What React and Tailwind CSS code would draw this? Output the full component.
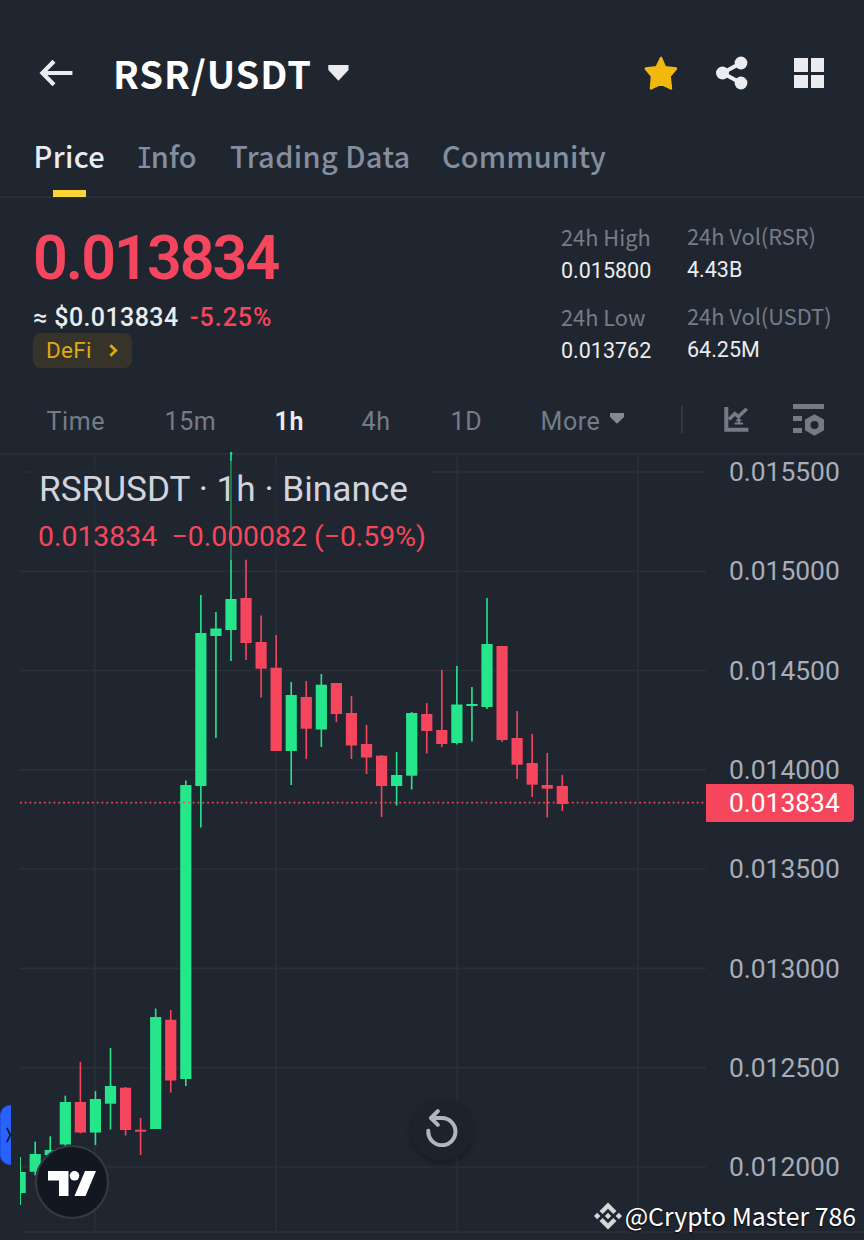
const UP = '#26e68b'
const DOWN = '#f6465d'

// [high, bodyTop, bodyBottom, low, rising] in chart pixels
const candles = [
  [1157, 1172, 1193, 1205, 1],
  [1141.7, 1154, 1171.7, 1175.5, 1],
  [1136.3, 1150, 1155, 1157, 1],
  [1095.7, 1102, 1144.5, 1148, 1],
  [1062, 1102, 1132.5, 1133.3, 0],
  [1091, 1099, 1132.5, 1145, 1],
  [1048, 1086, 1103.7, 1129.5, 1],
  [1087, 1087.7, 1130, 1135.5, 0],
  [1118, 1129.7, 1131.7, 1155, 0],
  [1008.5, 1017, 1129, 1129, 1],
  [1010, 1019.7, 1080.5, 1092.5, 0],
  [780.5, 785, 1079, 1086, 1],
  [595, 633, 786, 827.5, 1],
  [612, 628.5, 636, 738, 1],
  [452, 599, 630, 661, 1],
  [559.5, 598, 643, 660, 0],
  [615.5, 642, 668.7, 697.5, 0],
  [635, 667.7, 751, 751, 0],
  [682, 695, 751, 785, 1],
  [681, 697, 728.7, 759, 0],
  [674, 684.7, 729.5, 747, 1],
  [683, 683, 714, 722, 0],
  [696, 713, 745.5, 759, 0],
  [725, 744, 757.5, 774, 0],
  [755, 755.7, 786, 817, 0],
  [752, 775, 786, 805.5, 1],
  [712, 713, 775.7, 789.5, 1],
  [703, 714, 731, 753.5, 0],
  [670, 730, 744, 747, 0],
  [666, 704.5, 743, 744.5, 1],
  [687, 704, 706, 741.5, 1],
  [598, 644, 707, 709, 1],
  [646, 646, 740, 742, 0],
  [711, 738, 764.7, 779, 0],
  [734, 763, 784.7, 797, 0],
  [753, 785, 788.7, 817.5, 0],
  [775, 786, 804, 811, 0],
]

const gridY = [472, 571.3, 670.5, 769.8, 869, 968.3, 1067.6, 1167]
const gridX = [95, 276, 457, 638]
const scale = ['0.015500', '0.015000', '0.014500', '0.014000', '0.013500', '0.013000', '0.012500', '0.012000']

function Header() {
  return (
    <header className="flex h-[132px] items-center pt-[14px]">
      <svg className="ml-[39px] h-[28px] w-[34px]" viewBox="0 0 34 28" fill="none" stroke="#eaecef" strokeWidth="4.2">
        <path d="M15 2.2 3.4 14 15 25.8M3 14H33.4" />
      </svg>
      <h1 className="ml-[40px] w-[202px] whitespace-nowrap font-['Noto_Sans_CJK_SC',sans-serif] text-[38px] font-bold leading-none tracking-[1px] text-white">
        RSR/USDT
      </h1>
      <svg className="ml-[13px] h-[16px] w-[21px]" viewBox="0 0 21 16" fill="#eaecef">
        <path d="M.3 0H20.5V5L10.4 15.8.3 5Z" />
      </svg>
      <svg className="mb-[1px] ml-[295px] h-[36px] w-[34px]" viewBox="0 0 34 36" fill="#f0b90b" stroke="#f0b90b" strokeWidth="2.5" strokeLinejoin="round">
        <path d="M17 3 21 12.3 32 13.6 25.6 21.2 27 33.4 17 28.7 7 33.4 8 21.2 1.8 13.6 12.7 12.3Z" />
      </svg>
      <svg className="ml-[37px] h-[34px] w-[33px]" viewBox="0 0 33 34" fill="#eaecef" stroke="#eaecef">
        <path d="M26 7 7.5 17 26 27" fill="none" strokeWidth="4" />
        <circle cx="26" cy="7" r="6.4" stroke="none" />
        <circle cx="7.5" cy="17" r="6.5" stroke="none" />
        <circle cx="26" cy="27" r="6.4" stroke="none" />
      </svg>
      <div className="ml-[46px] grid grid-cols-2 gap-[3px]">
        <i className="size-[13.5px] bg-[#eaecef]" />
        <i className="size-[13.5px] bg-[#eaecef]" />
        <i className="size-[13.5px] bg-[#eaecef]" />
        <i className="size-[13.5px] bg-[#eaecef]" />
      </div>
    </header>
  )
}

function Tabs() {
  return (
    <nav className="flex h-[66px] items-start border-b-2 border-[#282e37] pl-[33px] font-['Noto_Sans_CJK_SC',sans-serif] text-[29px] font-medium leading-none text-[#848e9c]">
      <div className="flex h-[65px] w-[105px] flex-col text-[#eaecef]">
        <span className="pl-[0.5px] pt-[9px] tracking-[0.4px]">Price</span>
        <span className="ml-[20px] mt-[20px] h-[7px] w-[33px] bg-[#fcd535]" />
      </div>
      <span className="w-[92px] pt-[9px]">
        <span className="-ml-[2px] -mr-[2px] font-['DejaVu_Sans_Mono'] text-[28px] font-normal leading-none">I</span>nfo
      </span>
      <span className="w-[212px] whitespace-nowrap pt-[9px] tracking-[0.4px]">Trading Data</span>
      <span className="whitespace-nowrap pt-[9px] tracking-[0.1px]">Community</span>
    </nav>
  )
}

function Stat({ label, value }) {
  return (
    <div className="flex h-[80px] flex-col whitespace-nowrap">
      <span className="h-[34px] font-['Noto_Sans_CJK_SC',sans-serif] text-[21.8px] leading-none text-[#757c88]">{label}</span>
      <span className="font-['Roboto',sans-serif] text-[21.5px] font-[450] leading-none text-[#eaecef]">{value}</span>
    </div>
  )
}

function Summary() {
  return (
    <section className="flex h-[190px] pl-[33px]">
      <div className="w-[528px] font-['Roboto',sans-serif]">
        <div className="mt-[29.5px] text-[61px] font-semibold leading-none tracking-[-2px] text-[#f6465d]">0.013834</div>
        <div className="mt-[16px] flex text-[25px] font-medium leading-none">
          <span className="w-[157px] whitespace-nowrap tracking-[0.4px] text-[#eaecef]">≈ $0.013834</span>
          <span className="tracking-[1px] text-[#f6465d]">-5.25%</span>
        </div>
        <div className="mt-[3.5px] flex h-[35px] w-[99px] items-center rounded-[8px] bg-[#35332a] pl-[13px] text-[22.5px] leading-none tracking-[0.3px] text-[#dfa90e]">
          DeFi
          <svg className="ml-[17px] h-[13px] w-[9px]" viewBox="0 0 9 13" fill="none" stroke="#dfa90e" strokeWidth="2.8">
            <path d="M1.3 1.2 6.8 6.5 1.3 11.8" />
          </svg>
        </div>
      </div>
      <div className="w-[126px] pt-[27.5px]">
        <Stat label="24h High" value="0.015800" />
        <Stat label="24h Low" value="0.013762" />
      </div>
      <div className="pt-[26.5px]">
        <Stat label="24h Vol(RSR)" value="4.43B" />
        <Stat label="24h Vol(USDT)" value="64.25M" />
      </div>
    </section>
  )
}

function Intervals() {
  return (
    <div className="flex h-[67px] items-center border-b-2 border-[#282e37] pl-[46.5px] pt-[1px] font-['Roboto',sans-serif] text-[25px] leading-none tracking-[0.6px] text-[#757c88]">
      <span className="w-[118px]">Time</span>
      <span className="w-[110px]">15m</span>
      <span className="w-[87px] font-semibold text-[#eaecef]">1h</span>
      <span className="w-[89px]">4h</span>
      <span className="w-[90px]">1D</span>
      <span className="w-[69px]">More</span>
      <svg className="mb-[5px] h-[11px] w-[14px]" viewBox="0 0 14 11" fill="#848993">
        <path d="M0 0H14V4L7 10.7 0 4Z" />
      </svg>
      <span className="mb-[3px] ml-[57px] h-[27px] w-[2px] bg-[#343841]" />
      <svg className="mb-[3px] ml-[41px] h-[25px] w-[25px]" viewBox="0 0 25 25" fill="none" stroke="#757a85" strokeWidth="4">
        <path d="M2.3 0V22.8H24.4" />
        <path d="M5 12.5 10.8 6.6 14.4 9.6 22.8 1.8" strokeWidth="3.6" />
        <path d="M14.8 10.5 18 14H16V15.5H19V17.5H10.5V15.5H13.5V14H11.5Z" fill="#757a85" stroke="none" />
      </svg>
      <svg className="mb-[3px] ml-[44.5px] h-[32px] w-[31px]" viewBox="0 0 31 32" fill="#757a85">
        <path d="M0 0H31V5H0ZM0 12H9V17H0ZM0 24H9V29H0Z" />
        <path fillRule="evenodd" d="M21.5 10.2 31 15.5V26.2L21.5 31.8 12 26.2V15.5ZM21.5 17A4 4 0 1 0 21.5 25A4 4 0 1 0 21.5 17Z" />
      </svg>
    </div>
  )
}

function CandleChart() {
  return (
    <svg className="block h-[785px] w-[706px] shrink-0" viewBox="0 455 706 785">
      <defs>
        <clipPath id="pane">
          <rect x="20" y="452" width="686" height="790" />
        </clipPath>
      </defs>
      <g stroke="#2a2f38" strokeWidth="1.7">
        {gridY.map((y) => <path key={y} d={`M20 ${y}H706`} />)}
        {gridX.map((x) => <path key={x} d={`M${x} 452V1231`} />)}
        <path d="M20 1232H706" />
      </g>
      <g clipPath="url(#pane)">
        {candles.map(([high, top, bottom, low, rising], i) => {
          const x = 20.14 + 15.06 * i
          const color = rising ? UP : DOWN
          return (
            <g key={i}>
              <rect x={x - 0.8} y={high} width="1.6" height={low - high} fill={color} />
              <rect x={x - 5.6} y={top} width="11.2" height={bottom - top} fill={color} />
            </g>
          )
        })}
      </g>
      <path d="M20 802.7H706" stroke={DOWN} strokeWidth="1.7" strokeDasharray="1.7 3.1" />
    </svg>
  )
}

function Chart() {
  return (
    <section className="relative flex h-[785px]">
      <CandleChart />
      <div className="relative flex grow flex-col pl-[23px] pt-[3px] font-['Roboto',sans-serif] text-[26.4px] leading-[29px] text-[#a9adb8]">
        {scale.map((p) => <span key={p} className="h-[99.35px] shrink-0">{p}</span>)}
        <div className="absolute left-0 top-[329px] h-[38px] w-[148px] rounded-r-[4px] bg-[#f6465d] pl-[23px] leading-[39px] text-white">0.013834</div>
      </div>
      <div className="absolute bottom-[7px] right-0 h-[2px] w-[158px] bg-[#282e37]" />
      <div className="absolute left-[231px] top-[-3px] h-[3px] w-[1.6px] -translate-x-1/2 bg-[#26e68b]" />
      <div className="absolute left-[30px] top-[6px] h-[99px] w-[401px] bg-[#202630]/50" />
      <div className="absolute left-[38px] top-[13px] whitespace-nowrap font-['Roboto',sans-serif]">
        <div className="pl-[1px] pt-px text-[35.2px] leading-[40px] text-[#d1d4dc]">RSRUSDT · 1h · Binance</div>
        <div className="mt-[12px] flex text-[28.4px] leading-[32px] text-[#f6465d]">
          <span className="w-[133.5px]">0.013834</span>
          <span>−0.000082 (−0.59%)</span>
        </div>
      </div>
      <div className="absolute left-0 top-[650px] flex h-[60px] w-[11px] items-center justify-end overflow-hidden rounded-l-[10px] border border-r-0 border-[#1e53e5] bg-[#2962ff]">
        <svg className="h-[16px] w-[5px] shrink-0" viewBox="0 0 5 16" fill="none" stroke="#131722" strokeWidth="1.8">
          <path d="M.8.8 4.4 8 .8 15.2" />
        </svg>
      </div>
      <div className="absolute left-[35px] top-[690px] flex size-[74px] items-center justify-center rounded-full border-2 border-[#363a45] bg-[#131722]">
        <svg className="mt-[2px] h-[25px] w-[48px]" viewBox="0 0 48 25" fill="#fff">
          <path d="M0 0H20.5V25H11V9.5H0ZM37 0H48L37.5 25H26.5Z" />
          <circle cx="26.5" cy="4.8" r="4.8" />
        </svg>
      </div>
      <div className="absolute left-[411px] top-[644px] flex size-[62px] items-center justify-center rounded-full bg-[#1e222d] shadow-[0_3px_6px_rgba(0,0,0,0.3)]">
        <svg className="mb-[4px] h-[38px] w-[32px]" viewBox="0 0 32 38" fill="none" stroke="#b2b5be" strokeWidth="4" strokeLinecap="round" strokeLinejoin="round">
          <path d="M2.3 21.8A13.6 13.6 0 1 0 15.8 9H5M11.8 2.2 5 9 11.8 15.8" />
        </svg>
      </div>
      <div className="absolute bottom-[10px] right-[8px] flex items-center whitespace-nowrap font-['Noto_Sans_CJK_SC',sans-serif] text-[24.8px] leading-[30px] text-white [text-shadow:0_1px_2px_#000]">
        <svg className="mr-[3px] mt-[1px] h-[28px] w-[28px]" viewBox="0 0 28 28" fill="#d6d6d6">
          <path d="M14 .5 22.5 9 19.3 12 14 6.8 8.7 12 5.5 9ZM14 27.5 5.5 19 8.7 16 14 21.2 19.3 16 22.5 19ZM3.2 10.8 6.4 14 3.2 17.2 0 14ZM24.8 10.8 28 14 24.8 17.2 21.6 14ZM14 10.8 17.2 14 14 17.2 10.8 14Z" />
        </svg>
        @Crypto Master 786
      </div>
    </section>
  )
}

export default function App() {
  return (
    <main className="h-[1240px] w-[864px] overflow-hidden bg-[#202630]">
      <Header />
      <Tabs />
      <Summary />
      <Intervals />
      <Chart />
    </main>
  )
}
